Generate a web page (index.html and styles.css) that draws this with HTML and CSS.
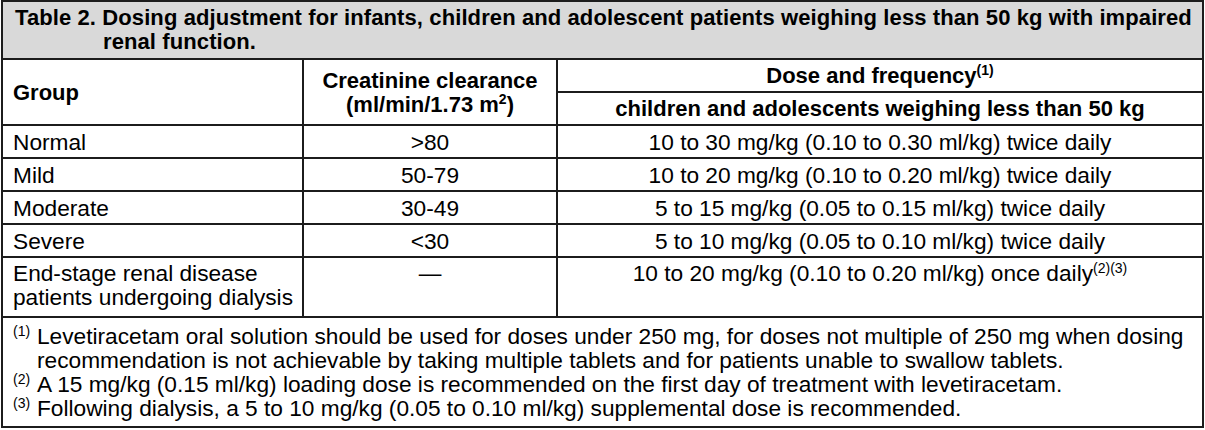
FILE: index.html
```html
<!DOCTYPE html>
<html lang="en">
<head>
<meta charset="utf-8">
<title>Table 2</title>
<link rel="stylesheet" href="styles.css">
</head>
<body>
<div class="wrap">
<table class="dosing">
  <colgroup>
    <col class="c1">
    <col class="c2">
    <col class="c3">
  </colgroup>
  <thead>
    <tr>
      <th class="title" colspan="3">Table 2. Dosing adjustment for infants, children and adolescent patients weighing less than 50 kg with impaired renal function.</th>
    </tr>
    <tr>
      <th class="hd left" rowspan="2">Group</th>
      <th class="hd center" rowspan="2">Creatinine clearance<br>(ml/min/1.73 m<sup class="sq">2</sup>)</th>
      <th class="hd center">Dose and frequency<sup>(1)</sup></th>
    </tr>
    <tr>
      <th class="hd center">children and adolescents weighing less than 50 kg</th>
    </tr>
  </thead>
  <tbody>
    <tr>
      <td class="left">Normal</td>
      <td class="center">&gt;80</td>
      <td class="center">10 to 30 mg/kg (0.10 to 0.30 ml/kg) twice daily</td>
    </tr>
    <tr>
      <td class="left">Mild</td>
      <td class="center">50-79</td>
      <td class="center">10 to 20 mg/kg (0.10 to 0.20 ml/kg) twice daily</td>
    </tr>
    <tr>
      <td class="left">Moderate</td>
      <td class="center">30-49</td>
      <td class="center">5 to 15 mg/kg (0.05 to 0.15 ml/kg) twice daily</td>
    </tr>
    <tr>
      <td class="left">Severe</td>
      <td class="center">&lt;30</td>
      <td class="center">5 to 10 mg/kg (0.05 to 0.10 ml/kg) twice daily</td>
    </tr>
    <tr class="tall">
      <td class="left">End-stage renal disease<br>patients undergoing dialysis</td>
      <td class="center top">&mdash;</td>
      <td class="center top">10 to 20 mg/kg (0.10 to 0.20 ml/kg) once daily<sup>(2)</sup><sup>(3)</sup></td>
    </tr>
    <tr>
      <td class="notes" colspan="3">
        <p class="note"><sup class="mark">(1)</sup>Levetiracetam oral solution should be used for doses under 250 mg, for doses not multiple of 250 mg when dosing recommendation is not achievable by taking multiple tablets and for patients unable to swallow tablets.</p>
        <p class="note"><sup class="mark">(2)</sup>A 15 mg/kg (0.15 ml/kg) loading dose is recommended on the first day of treatment with levetiracetam.</p>
        <p class="note"><sup class="mark">(3)</sup>Following dialysis, a 5 to 10 mg/kg (0.05 to 0.10 ml/kg) supplemental dose is recommended.</p>
      </td>
    </tr>
  </tbody>
</table>
</div>
</body>
</html>
```
FILE: styles.css
```css
html, body {
  margin: 0;
  padding: 0;
  background: #ffffff;
}

.wrap {
  padding: 0 0 0 1px;
}

.dosing {
  width: 1203px;
  border-collapse: collapse;
  table-layout: fixed;
  font-family: "Liberation Sans", Arial, sans-serif;
  font-size: 22.7px;
  line-height: 24px;
  color: #000;
}

.c1 { width: 301px; }
.c2 { width: 254px; }

.dosing th,
.dosing td {
  border: 2px solid #1c1c1c;
  padding: 4px 10px 3px 10px;
  vertical-align: middle;
}

.dosing td.left {
  white-space: nowrap;
  padding-right: 2px;
}

.dosing th {
  font-weight: bold;
  font-size: 22px;
}

.dosing .title {
  background: #d9d9d9;
  text-align: left;
  padding: 4px 4px 4px 100px;
  text-indent: -88px;
  letter-spacing: 0.1px;
}

.left { text-align: left; }
.center { text-align: center; }

.dosing .top {
  vertical-align: top;
}

.tall td {
  padding-top: 3px;
  padding-bottom: 7px;
}

sup {
  font-size: 14px;
  line-height: 0;
  vertical-align: 8px;
}

sup.sq {
  font-size: 14px;
  vertical-align: 8px;
}

.dosing .notes {
  padding: 6px 2px 6px 10px;
}

.note {
  margin: 0;
  padding-left: 24px;
  text-indent: -24px;
}

.mark {
  display: inline-block;
  width: 24px;
  text-indent: 0;
  font-size: 14px;
  vertical-align: 8px;
  line-height: 0;
}
```
